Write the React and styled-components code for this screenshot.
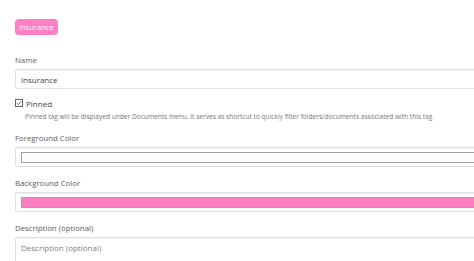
import React from 'react';
import styled, { createGlobalStyle } from 'styled-components';

const GlobalStyles = createGlobalStyle`
  * {
    margin: 0;
    padding: 0;
    box-sizing: border-box;
  }
  body {
    background: #ffffff;
    font-family: 'Open Sans', 'Noto Sans', sans-serif;
    overflow: hidden;
  }
`;

const Page = styled.div`
  width: 640px;
  padding: 19px 0 0 15px;
  display: flex;
  flex-direction: column;
  align-items: flex-start;
`;

const Badge = styled.span`
  display: inline-block;
  height: 16px;
  line-height: 16px;
  padding: 0 4px;
  border-radius: 4px;
  background: ${(p) => p.$bg};
  color: ${(p) => p.$fg};
  font-size: 7.6px;
  margin-bottom: 19px;
`;

const Field = styled.div`
  width: 100%;
  display: flex;
  flex-direction: column;
  margin-bottom: 10px;
`;

const Label = styled.label`
  height: 12px;
  line-height: 12px;
  font-size: 7.8px;
  color: #5c5c5c;
  margin-bottom: 3px;
`;

const Box = styled.div`
  height: ${(p) => p.$h || 20}px;
  border: 1px solid #e0e0e0;
  border-radius: 2px;
  box-shadow: inset 0 1px 0 #f2f2f2;
  display: flex;
  align-items: ${(p) => (p.$top ? 'flex-start' : 'center')};
  padding: ${(p) => (p.$top ? '4px 5px' : '0 5px')};
  font-size: 8px;
  color: ${(p) => (p.$muted ? '#808080' : '#444')};
  background: #fff;
`;

const Swatch = styled.div`
  width: 100%;
  height: 11px;
  border: 1px solid #a0a0a0;
  background: ${(p) => p.$color};
`;

const CheckRow = styled.div`
  display: flex;
  align-items: center;
  gap: 3px;
  height: 12px;
  margin-top: -2px;
  margin-bottom: 3px;
  font-size: 8px;
  color: #444;
`;

const Check = styled.span`
  width: 8px;
  height: 8px;
  border: 1px solid #666;
  display: inline-flex;
  align-items: center;
  justify-content: center;
`;

const Help = styled.p`
  height: 10px;
  line-height: 10px;
  padding-left: 10px;
  font-size: 6.6px;
  color: #777;
  white-space: nowrap;
  margin-bottom: 10px;
`;

export default function App() {
  return (
    <>
      <GlobalStyles />
      <Page>
        <Badge $bg="#ff80c2" $fg="#ffffff">insurance</Badge>

        <Field>
          <Label>Name</Label>
          <Box>insurance</Box>
        </Field>

        <CheckRow>
          <Check>
            <svg width="6" height="6" viewBox="0 0 6 6">
              <path d="M0.8 3.1 L2.4 4.6 L5.3 1.2" fill="none" stroke="#555" strokeWidth="0.9" />
            </svg>
          </Check>
          Pinned
        </CheckRow>
        <Help>
          Pinned tag will be displayed under Documents menu. It serves as shortcut to quickly filter folders/documents associated with this tag
        </Help>

        <Field>
          <Label>Foreground Color</Label>
          <Box>
            <Swatch $color="#ffffff" />
          </Box>
        </Field>

        <Field>
          <Label>Background Color</Label>
          <Box>
            <Swatch $color="#ff80c2" />
          </Box>
        </Field>

        <Field>
          <Label>Description (optional)</Label>
          <Box $h={40} $top $muted>Description (optional)</Box>
        </Field>
      </Page>
    </>
  );
}
